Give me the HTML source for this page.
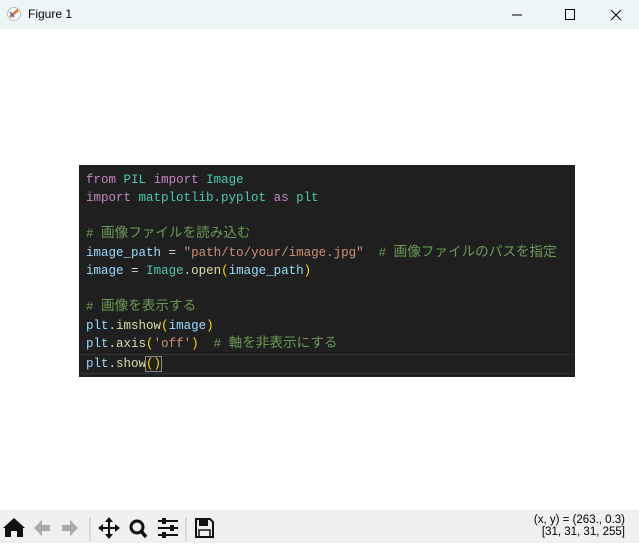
<!DOCTYPE html>
<html><head><meta charset="utf-8"><style>
*{margin:0;padding:0;box-sizing:border-box}
body{width:639px;height:543px;background:#fff;position:relative;overflow:hidden;font-family:"Liberation Sans","Noto Sans CJK JP",sans-serif}
#title{position:absolute;left:0;top:0;width:639px;height:29px;background:#eef5f7}
#title .t{position:absolute;left:28px;top:7px;font-size:12px;color:#000}
#code{position:absolute;left:79px;top:165px;width:496px;height:212px;background:#1f1f1f;overflow:hidden}
.l{position:absolute;left:7px;font-family:"Liberation Mono","Noto Sans CJK JP",monospace;font-size:12.5px;white-space:pre;line-height:18px;height:18px}
.j{font-size:13.6px;font-family:"Noto Sans CJK JP",sans-serif;line-height:1}
.k{color:#c586c0}.m{color:#4ec9b0}.v{color:#9cdcfe}.s{color:#ce9178}.c{color:#6a9955}.f{color:#dcdcaa}.y{color:#ffd700}.w{color:#d4d4d4}
#tb{position:absolute;left:0;top:510px;width:639px;height:33px;background:#f0f0f0}
#coord{position:absolute;right:14px;top:514px;font-size:11.5px;line-height:12px;text-align:right;color:#000}
</style></head><body>
<div id="title">
<svg style="position:absolute;left:6px;top:6px" width="16" height="16" viewBox="0 0 16 16"><circle cx="8" cy="8" r="6.5" fill="#fff" stroke="#bbb"/><path d="M4 11L12 4" stroke="#e07020" stroke-width="2.5"/><path d="M4 6l4 5" stroke="#3070c0" stroke-width="1.5"/></svg>
<span class="t">Figure 1</span>
<svg style="position:absolute;left:510px;top:8px" width="14" height="14"><path d="M2 7h10" stroke="#000"/></svg>
<svg style="position:absolute;left:563px;top:8px" width="14" height="14"><rect x="2.5" y="1.5" width="9" height="10" fill="none" stroke="#000"/></svg>
<svg style="position:absolute;left:609px;top:8px" width="14" height="14"><path d="M2 2l10 10M12 2L2 12" stroke="#000"/></svg>
</div>
<div id="code">
<div class="l" style="top:6px"><span class="k">from</span> <span class="m">PIL</span> <span class="k">import</span> <span class="m">Image</span></div>
<div class="l" style="top:24px"><span class="k">import</span> <span class="m">matplotlib.pyplot</span> <span class="k">as</span> <span class="m">plt</span></div>
<div class="l" style="top:60px"><span class="c"># <span class="j">画像ファイルを読み込む</span></span></div>
<div class="l" style="top:79px"><span class="v">image_path</span> <span class="w">=</span> <span class="s">"path/to/your/image.jpg"</span>  <span class="c"># <span class="j">画像ファイルのパスを指定</span></span></div>
<div class="l" style="top:97px"><span class="v">image</span> <span class="w">=</span> <span class="m">Image</span><span class="w">.</span><span class="f">open</span><span class="y">(</span><span class="v">image_path</span><span class="y">)</span></div>
<div class="l" style="top:133px"><span class="c"># <span class="j">画像を表示する</span></span></div>
<div class="l" style="top:152px"><span class="v">plt</span><span class="w">.</span><span class="f">imshow</span><span class="y">(</span><span class="v">image</span><span class="y">)</span></div>
<div class="l" style="top:170px"><span class="v">plt</span><span class="w">.</span><span class="f">axis</span><span class="y">(</span><span class="s">'off'</span><span class="y">)</span>  <span class="c"># <span class="j">軸を非表示にする</span></span></div>
<div style="position:absolute;left:0;top:189px;width:496px;height:20px;border-top:1px solid #333;border-bottom:1px solid #333"></div>
<div class="l" style="top:190px"><span class="v">plt</span><span class="w">.</span><span class="f">show</span><span class="y" style="outline:1px solid #888">()</span></div>
</div>
<div id="tb">
<svg width="240" height="33" viewBox="0 0 240 33">
<path d="M5 27V18H3L14 8L25 18H23V27H17V21H11V27Z" fill="#111"/>
<path d="M34 18l8-8v5h8v6h-8v5z" fill="#aaa"/>
<path d="M78 18l-8-8v5h-8v6h8v5z" fill="#aaa"/>
<path d="M90 7v24" stroke="#bbb"/>
<path d="M109 7l4 5h-3v5h5v-3l5 4-5 4v-3h-5v5h3l-4 5-4-5h3v-5h-5v3l-5-4 5-4v3h5v-5h-3z" fill="#111"/>
<circle cx="137" cy="17" r="6" fill="none" stroke="#111" stroke-width="3"/><path d="M141 21l5 6" stroke="#111" stroke-width="3.5"/>
<path d="M158 11h20M158 18h20M158 25h20" stroke="#111" stroke-width="2"/><rect x="162" y="8" width="4" height="6" fill="#111"/><rect x="170" y="15" width="4" height="6" fill="#111"/><rect x="162" y="22" width="4" height="6" fill="#111"/>
<path d="M186 7v24" stroke="#bbb"/>
<path d="M196 9h14l3 3v15h-17z" fill="none" stroke="#111" stroke-width="2"/><rect x="199" y="10" width="9" height="6" fill="#111"/><rect x="199" y="20" width="11" height="7" fill="none" stroke="#111" stroke-width="1.5"/>
</svg>
</div>
<div id="coord">(x, y) = (263., 0.3)<br>[31, 31, 31, 255]</div>
</body></html>
